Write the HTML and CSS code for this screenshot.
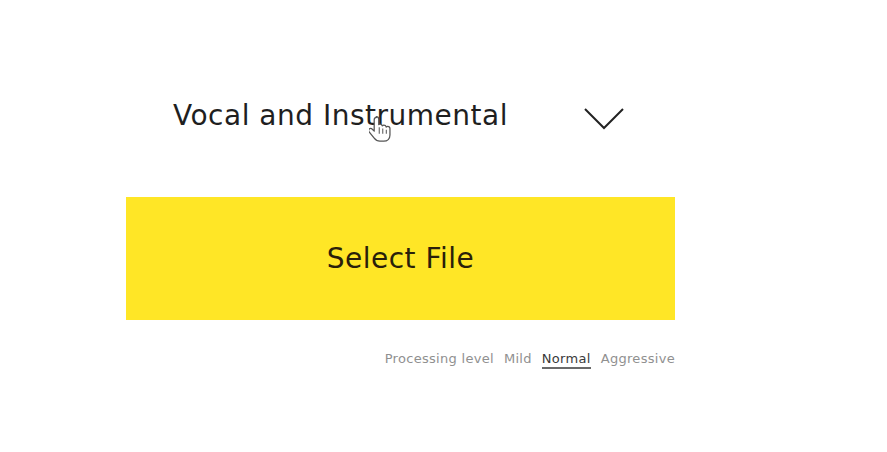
FILE: index.html
```html
<!DOCTYPE html>
<html>
  <head>
    <meta charset="UTF-8" />
    <title>Vocal Remover</title>
    <link rel="stylesheet" href="styles.css">
  </head>
  <body>
    <div class="panel">
      <div class="select-row">
        <div class="select-label">Vocal and Instrumental</div>
        <svg class="chevron" width="40" height="22" viewBox="0 0 40 22">
          <polyline points="1,1 20,20 39,1" fill="none" stroke="#222" stroke-width="2" />
        </svg>
      </div>
      <button class="select-button">Select File</button>
      <div class="levels">
        <span class="level-title">Processing level</span>
        <span class="level">Mild</span>
        <span class="level active">Normal</span>
        <span class="level">Aggressive</span>
      </div>
    </div>

    <!-- mouse pointer over the dropdown -->
    <svg class="pointer" width="23" height="29" viewBox="0 0 18 23">
      <path d="M6,1 c-1,0 -2,0.8 -2,2 v9 l-1.5,-1.5 c-0.8,-0.8 -2,-0.8 -2.6,0 c-0.5,0.6 -0.4,1.5 0.1,2.1 l4,5 c1,1.3 2.5,2.4 4.5,2.4 h3 c3,0 5,-2 5,-5 v-5 c0,-1 -0.8,-1.8 -1.8,-1.8 c-0.5,0 -0.9,0.2 -1.2,0.5 c-0.2,-0.9 -0.9,-1.5 -1.8,-1.5 c-0.5,0 -1,0.2 -1.3,0.6 c-0.3,-0.8 -1,-1.3 -1.8,-1.3 c-0.4,0 -0.7,0.1 -1,0.3 v-4.3 c0,-1.2 -1,-2 -2,-2 z"
        fill="#fff" stroke="#555" stroke-width="1" stroke-linejoin="round" />
      <path d="M8,9 v5 M10.8,10 v4 M13.6,11 v3" stroke="#555" stroke-width="0.8" />
    </svg>
  </body>
</html>
```

FILE: styles.css
```css
* {
  box-sizing: border-box;
  font-family: "DejaVu Sans", sans-serif;
}

body {
  margin: 0;
  background: #fff;
}

.panel {
  width: 549px;
  margin-left: 126px;
  padding-top: 96px;
}

.select-row {
  display: flex;
  justify-content: space-between;
  align-items: center;
  padding: 0 51px 0 47px;
  height: 40px;
}

.select-label {
  font-size: 28px;
  letter-spacing: 0.5px;
  color: #1f1f1f;
  margin-bottom: 2px;
}

.chevron {
  display: block;
  margin-top: 6px;
}

.select-button {
  display: block;
  width: 100%;
  height: 123px;
  margin-top: 61px;
  border: none;
  background: #ffe626;
  color: #2a1f0a;
  font-size: 28px;
  letter-spacing: 0.5px;
  cursor: pointer;
}

.levels {
  display: flex;
  justify-content: flex-end;
  gap: 10px;
  margin-top: 31px;
  font-size: 13px;
  letter-spacing: 0.3px;
  color: #909090;
}

.level {
  padding-bottom: 1px;
}

.level.active {
  color: #3a3a3a;
  border-bottom: 2px solid #6a6a6a;
}

.pointer {
  position: absolute;
  left: 369px;
  top: 116px;
}
```
